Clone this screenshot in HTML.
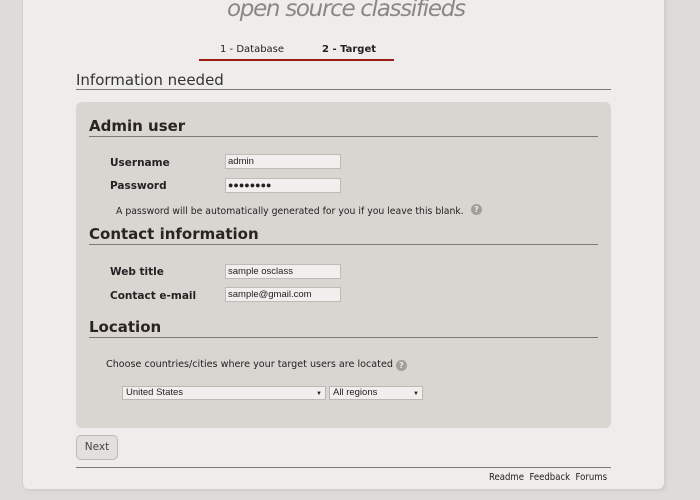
<!DOCTYPE html>
<html><head><style>
*{margin:0;padding:0;box-sizing:border-box}
body{width:700px;height:500px;background:#dedbd8;font-family:"DejaVu Sans","Liberation Sans",sans-serif;position:relative;overflow:hidden;color:#222}
.card{position:absolute;left:22px;top:-5px;width:642px;height:494px;background:#efedeb;border-radius:0 0 6px 6px;box-shadow:2px 2px 3px #cfccc8;border-left:1px solid #d4d1ce}
.a{position:absolute;white-space:nowrap}
.logo{left:227px;top:-4px;font-family:"DejaVu Sans",sans-serif;font-style:italic;font-weight:200;font-size:23px;color:#8a8886;letter-spacing:-1.3px}
.panel{left:76px;top:102px;width:535px;height:326px;background:#d9d6d2;border-radius:6px}
h2{position:absolute;font-size:15px;font-weight:bold;color:#2a2420;left:13px;width:509px;border-bottom:1px solid #7d7873;padding-bottom:1px}
.lbl{font-size:10.5px;font-weight:bold;color:#222}
.in{background:#f1efed;border:1px solid #bfbbb7;width:116px;height:15px;font-size:9.5px;padding-left:2px;line-height:13px;font-family:"Liberation Sans",sans-serif}
.q{width:11px;height:11px;border-radius:50%;background:#a19e9b;color:#eee;font-size:8px;text-align:center;line-height:11px;font-weight:bold}
.sel{background:#f1efed;border:1px solid #bbb7b3;height:14px;font-size:9.5px;font-family:"Liberation Sans",sans-serif;padding-left:3px;line-height:12px}
.sel span{position:absolute;right:3px;font-size:6px;top:1px}
.sm{font-size:10px;color:#222}
</style></head><body>
<div class="card"></div>
<div class="a logo">open source classifieds</div>
<div class="a sm" style="left:220px;top:44px">1 - Database</div>
<div class="a sm" style="left:322px;top:44px;font-weight:bold">2 - Target</div>
<div class="a" style="left:199px;top:59px;width:195px;height:2px;background:#9e1c14"></div>
<div class="a" style="left:76px;top:71px;font-size:15px;color:#333">Information needed</div>
<div class="a" style="left:76px;top:89px;width:535px;height:1px;background:#7d7873"></div>
<div class="a panel">
 <h2 style="top:15px">Admin user</h2>
 <div class="a lbl" style="left:34px;top:55px">Username</div>
 <div class="a in" style="left:149px;top:52px">admin</div>
 <div class="a lbl" style="left:34px;top:78px">Password</div>
 <div class="a in" style="left:149px;top:76px;font-size:9px">●●●●●●●●</div>
 <div class="a sm" style="left:40px;top:104px;font-size:9.3px">A password will be automatically generated for you if you leave this blank.</div>
 <div class="a q" style="left:395px;top:102px">?</div>
 <h2 style="top:123px">Contact information</h2>
 <div class="a lbl" style="left:34px;top:164px">Web title</div>
 <div class="a in" style="left:149px;top:162px">sample osclass</div>
 <div class="a lbl" style="left:34px;top:188px">Contact e-mail</div>
 <div class="a in" style="left:149px;top:185px">sample@gmail.com</div>
 <h2 style="top:216px">Location</h2>
 <div class="a sm" style="left:30px;top:257px;font-size:9.6px">Choose countries/cities where your target users are located</div>
 <div class="a q" style="left:320px;top:258px">?</div>
 <div class="a sel" style="left:46px;top:284px;width:204px">United States<span>▼</span></div>
 <div class="a sel" style="left:253px;top:284px;width:94px">All regions<span>▼</span></div>
</div>
<div class="a" style="left:76px;top:435px;width:42px;height:25px;border:1px solid #bdb9b5;border-radius:5px;background:#e2dfdc;font-size:10.5px;color:#444;text-align:center;line-height:23px">Next</div>
<div class="a" style="left:76px;top:467px;width:535px;height:1px;background:#7d7873"></div>
<div class="a" style="left:489px;top:472px;font-size:9.5px;color:#222;font-family:'DejaVu Sans Condensed','DejaVu Sans',sans-serif">Readme&nbsp; Feedback&nbsp; Forums</div>
</body></html>
